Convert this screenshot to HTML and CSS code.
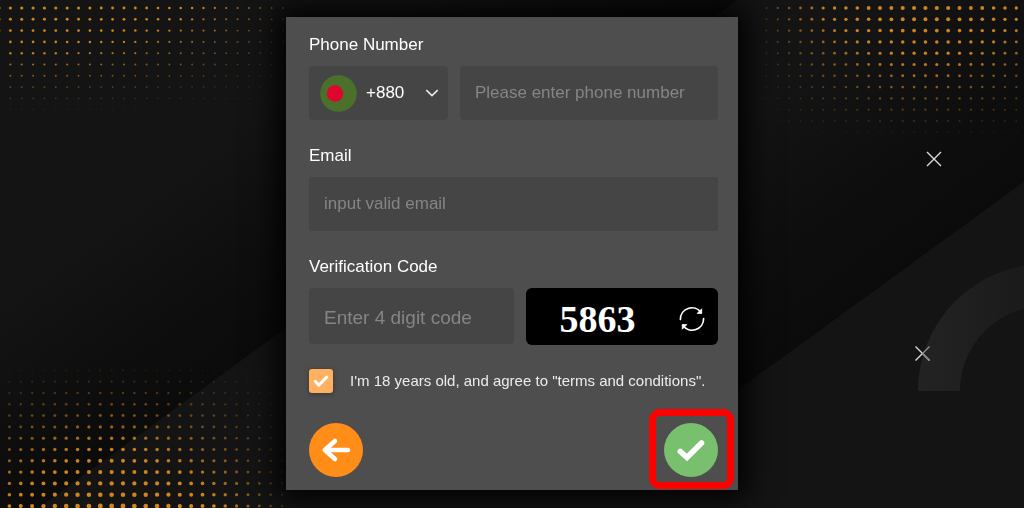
FILE: index.html
```html
<!DOCTYPE html>
<html lang="en">
<head>
<meta charset="utf-8">
<meta name="viewport" content="width=device-width, initial-scale=1">
<title>Sign up</title>
<link rel="stylesheet" href="styles.css">
</head>
<body>
<svg class="backdrop" viewBox="0 0 1024 508" preserveAspectRatio="xMidYMid slice" aria-hidden="true">
  <defs>
    <linearGradient id="band-a" gradientUnits="userSpaceOnUse" x1="139" y1="191" x2="255" y2="351">
      <stop offset="0" stop-color="#141414"/><stop offset=".75" stop-color="#0d0d0d"/><stop offset="1" stop-color="#0b0b0b"/>
    </linearGradient>
    <linearGradient id="band-b" gradientUnits="userSpaceOnUse" x1="310" y1="427" x2="441" y2="606">
      <stop offset="0" stop-color="#141414"/><stop offset=".7" stop-color="#0d0d0d"/><stop offset="1" stop-color="#0b0b0b"/>
    </linearGradient>
    <linearGradient id="arc" x1="0" x2="1" y1="0" y2="0">
      <stop offset="0" stop-color="#232323"/><stop offset=".5" stop-color="#191919"/>
    </linearGradient>
  </defs>
  <rect width="1024" height="508" fill="#141414"/>
  <path d="M0 0H738L39 508H0z" fill="url(#band-a)"/>
  <path d="M738 0H1024V182L576 508H39z" fill="url(#band-b)"/>
  <path d="M286 390H738L1024 182V508H286z" fill="#141414"/>
  <path d="M39 508L286 328V508z" fill="#141414"/>
  <path d="M918 391a127 127 0 0 1 254 0h-42a85 85 0 0 0-170 0z" fill="url(#arc)"/>
  <g id="dots" fill="#d98a20"></g>
  <path d="M927 152l14 14M941 152l-14 14" stroke="#dcdcdc" stroke-width="1.4"/>
  <path d="M915.500 346.500l14 14M915.500 360.500l7-7" stroke="#dcdcdc" stroke-width="1.4"/>
  <path d="M922.500 353.500l7-7M922.500 353.500l7 7" stroke="#8a8a8a" stroke-width="1.4"/>
</svg>

<main class="page">
  <form class="card">
    <div class="fields">
      <div class="field">
        <label for="phone">Phone Number</label>
        <div class="row row-phone">
          <div class="box country">
            <svg class="flag" viewBox="0 0 37 37" aria-hidden="true"><circle cx="18.500" cy="18.500" r="18.300" fill="#4a702c"/><circle cx="15" cy="18.500" r="8.200" fill="#e0052c"/></svg>
            <select aria-label="Country code"><option>+880</option></select>
            <svg class="chevron" viewBox="0 0 14 8" aria-hidden="true"><path d="M1.300 1.200L7 6.700l5.700-5.500"/></svg>
          </div>
          <input class="box" id="phone" type="tel" placeholder="Please enter phone number">
        </div>
      </div>
      <div class="field">
        <label for="email">Email</label>
        <input class="box" id="email" type="email" placeholder="input valid email">
      </div>
      <div class="field">
        <label for="code">Verification Code</label>
        <div class="row row-code">
          <input class="box code" id="code" type="text" placeholder="Enter 4 digit code">
          <div class="captcha">
            <span class="digits">5863</span>
            <button class="refresh" type="button" aria-label="New code">
              <svg viewBox="0 0 26 26" aria-hidden="true"><g fill="none" stroke="#fff" stroke-width="1.700" stroke-linecap="round" stroke-linejoin="round"><path d="M1.400 13.500A11.400 11.400 0 0 1 22 6.500"/><path d="M24.600 12.500A11.400 11.400 0 0 1 4 19.500"/></g><path d="M22.700 2.800v4.600h-4.500zM3.300 23.200v-4.600h4.500z" fill="#fff" stroke="#fff" stroke-width=".8" stroke-linejoin="round"/></svg>
            </button>
          </div>
        </div>
      </div>
    </div>
    <div class="agree">
      <span class="tick">
        <input type="checkbox" id="agree" checked>
        <svg viewBox="0 0 24 24" aria-hidden="true"><path d="M6.200 12.300l3.700 3.800L17.800 8"/></svg>
      </span>
      <label for="agree">I'm 18 years old, and agree to "terms and conditions".</label>
    </div>
    <div class="actions">
      <button class="round back" type="button" aria-label="Back">
        <svg viewBox="0 0 54 54" aria-hidden="true"><path d="M39 27H16M26 18L15.800 27 26 36"/></svg>
      </button>
      <div class="confirm">
        <button class="round ok" type="submit" aria-label="Confirm">
          <svg viewBox="0 0 54 54" aria-hidden="true"><path d="M16.300 28.500l6.700 6L37.500 20"/></svg>
        </button>
      </div>
    </div>
  </form>
</main>
<script src="dots.js"></script>
</body>
</html>
```
FILE: styles.css
```css
* { box-sizing: border-box; }

body {
  margin: 0;
  min-height: 100vh;
  background: #141414;
  color: #fff;
  font: 17px/20px "Liberation Sans", Arial, sans-serif;
}

input, select, button { font: inherit; color: inherit; }

button { padding: 0; border: 0; cursor: pointer; }

.backdrop {
  position: fixed;
  inset: 0;
  width: 100%;
  height: 100%;
}

.page {
  position: relative;
  display: flex;
  justify-content: center;
  padding: 17px 16px;
}

.card {
  display: flex;
  flex-direction: column;
  gap: 24px;
  width: 100%;
  max-width: 452px;
  padding: 18px 20px 13px 23px;
  background: #4e4e4e;
  box-shadow: 0 0 28px 8px #000;
}

.fields {
  display: flex;
  flex-direction: column;
  gap: 26px;
}

.field {
  display: flex;
  flex-direction: column;
  gap: 11px;
}

.row { display: grid; gap: 12px; }
.row-phone { grid-template-columns: 7fr 13fr; }
.row-code { grid-template-columns: 17fr 16fr; }

.box {
  width: 100%;
  min-width: 0;
  height: 54px;
  padding: 0 15px;
  border: 0;
  border-radius: 4px;
  background: #454545;
}

.box::placeholder { color: #858585; opacity: 1; }

.code { height: 56px; padding-top: 3px; font-size: 19px; }

.country {
  display: flex;
  align-items: center;
  gap: 9px;
  padding: 0 9px 0 11px;
}

.country select {
  flex: 1;
  min-width: 0;
  padding: 0;
  border: 0;
  background: none;
  appearance: none;
}

.flag { flex: none; width: 37px; height: 37px; }
.chevron { flex: none; width: 14px; height: 8px; fill: none; stroke: #e8e8e8; stroke-width: 1.6; }

.captcha {
  display: flex;
  align-items: center;
  justify-content: space-between;
  height: 57px;
  padding: 4px 13px 0 34px;
  border-radius: 6px;
  background: #000;
}

.digits { font: bold 38px/50px "Liberation Serif", "Times New Roman", serif; }

.refresh { width: 26px; height: 26px; background: none; }
.refresh svg { display: block; }

.agree {
  display: flex;
  align-items: center;
  gap: 17px;
  color: #ececec;
  font-size: 15px;
}

.tick { display: grid; width: 24px; height: 24px; }
.tick > * { grid-area: 1 / 1; width: 24px; height: 24px; margin: 0; }
.tick input { appearance: none; border-radius: 3px; background: #ffb060; box-shadow: 0 1px 4px #333; }
.tick svg { position: relative; pointer-events: none; fill: none; stroke: #fff; stroke-width: 3; stroke-linecap: round; stroke-linejoin: round; }

.actions { display: flex; justify-content: space-between; padding-top: 6px; }

.round { display: block; width: 54px; height: 54px; border-radius: 50%; }
.round svg { display: block; fill: none; stroke: #fff; stroke-linecap: round; stroke-linejoin: round; }
.back { background: #ff8d17; }
.back svg { stroke-width: 4.5; }
.ok { background: #78bf6e; }
.ok svg { stroke-width: 5.6; stroke-linecap: round; stroke-linejoin: miter; }

.confirm { position: relative; }
.confirm::after {
  content: "";
  position: absolute;
  inset: -14px -16px -12px -15px;
  border: 7px solid #f00;
  border-radius: 11px;
  pointer-events: none;
}
```
FILE: dots.js
```js
// Halftone corners: dots shrink and fade away from each field's peak column and row.
const PITCH = 11.36;
const fields = [
  { x: -1, y: 8, dir: 1, cols: 26, rows: 10, peak: 2, spread: 28, size: 1.6 },
  { x: 9.4, y: 506, dir: -1, cols: 25, rows: 13, peak: 9, spread: 17, size: 2.4 },
  { x: 766.4, y: 8, dir: 1, cols: 23, rows: 12, peak: 14, spread: 16, size: 2.1 }
];
const group = document.getElementById("dots");

for (const f of fields) {
  for (let r = 0; r < f.rows; r++) {
    for (let c = 0; c < f.cols; c++) {
      if (c * PITCH + f.x < 0 && r > 2) continue;
      const across = Math.max(0, 1 - Math.pow(Math.abs(c - f.peak) / f.spread, 1.6));
      const down = 1 - r / f.rows;
      const dot = document.createElementNS("http://www.w3.org/2000/svg", "circle");
      dot.setAttribute("cx", f.x + c * PITCH);
      dot.setAttribute("cy", f.y + f.dir * r * 11.3);
      dot.setAttribute("r", f.size * (0.38 + 0.62 * across * down));
      dot.setAttribute("opacity", Math.min(0.95, across * down * 1.5));
      group.appendChild(dot);
    }
  }
}
```
